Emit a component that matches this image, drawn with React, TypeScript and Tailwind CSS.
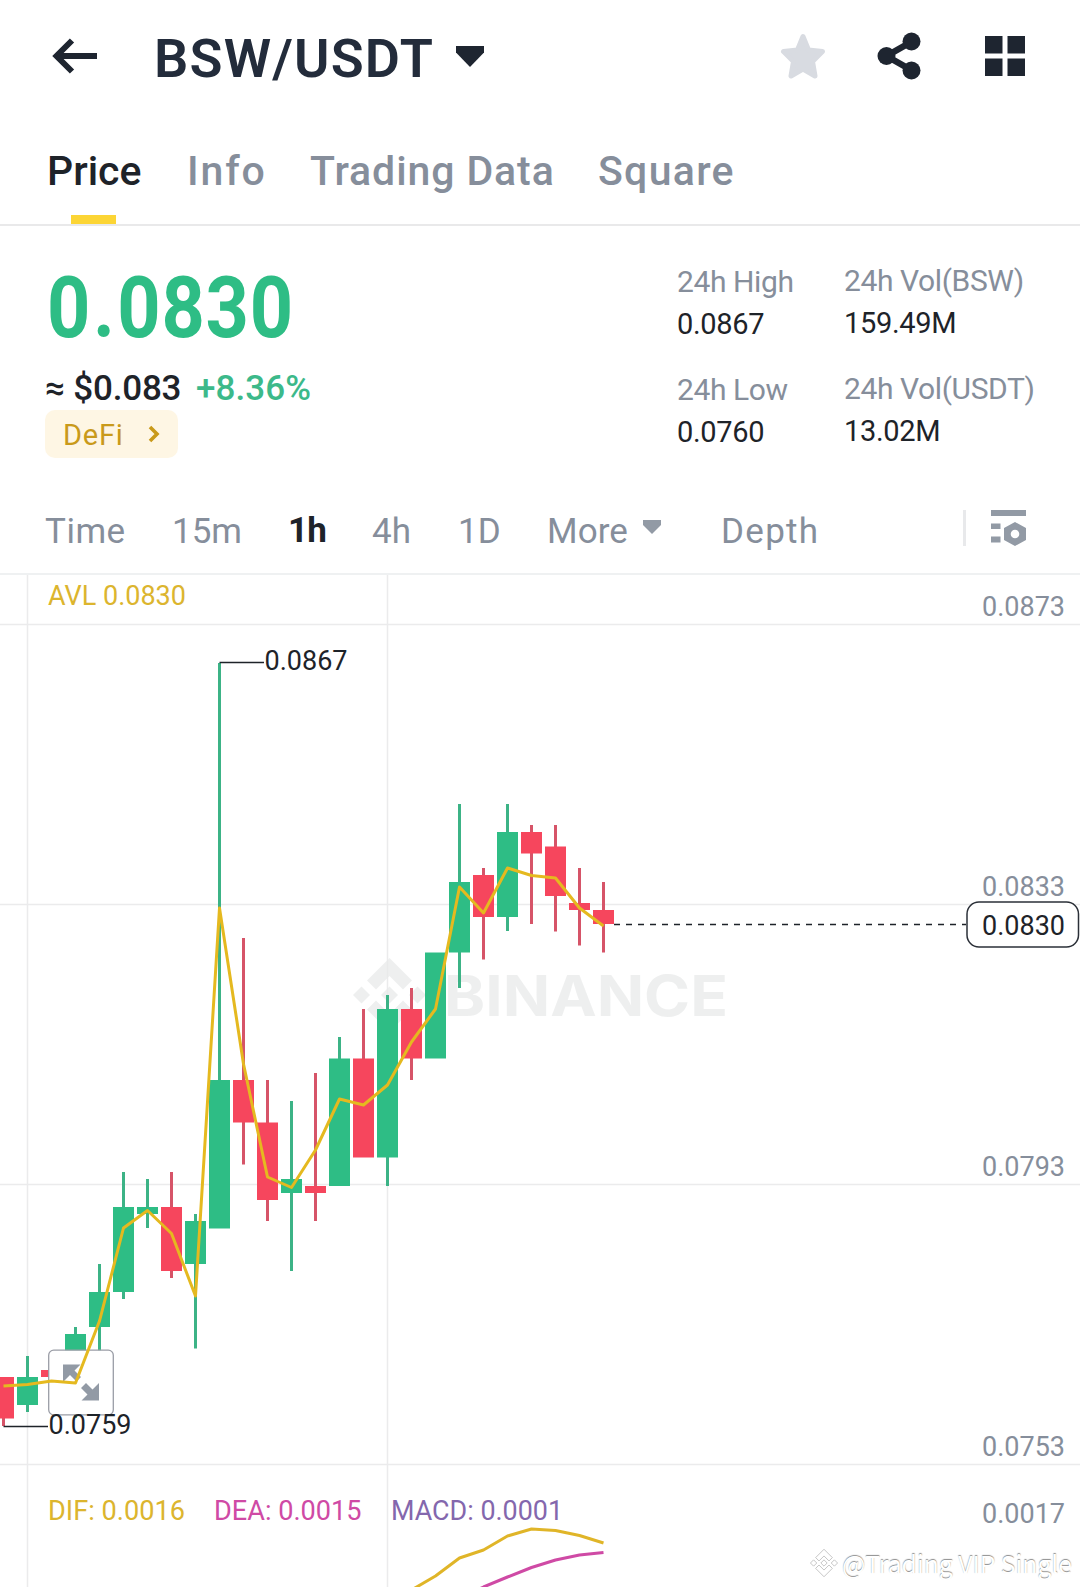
import type { ReactNode } from 'react';

const GREEN = '#2ebd85';
const RED = '#f6465d';
const GREEN_WICK = '#3cb386';
const RED_WICK = '#d65468';

// [center x, body top, body bottom, wick top, wick bottom, is rising]
type Candle = [number, number, number, number, number, boolean];

const candles: Candle[] = [
  [3.5, 1377, 1418.5, 1377, 1426, false],
  [27.5, 1377, 1405, 1356, 1412, true],
  [51.5, 1370, 1377, 1370, 1377, false],
  [75.5, 1334, 1400, 1327, 1418, true],
  [99.5, 1292, 1327, 1264, 1356, true],
  [123.5, 1207, 1292, 1172, 1299, true],
  [147.5, 1207, 1214, 1179, 1228, true],
  [171.5, 1207, 1271, 1172, 1278, false],
  [195.5, 1221, 1264, 1214, 1348.5, true],
  [219.5, 1080, 1228.5, 663, 1228, true],
  [243.5, 1080, 1122.5, 938, 1164.5, false],
  [267.5, 1122.5, 1200, 1080, 1221, false],
  [291.5, 1179, 1193, 1101, 1271, true],
  [315.5, 1186, 1193, 1073, 1221, false],
  [339.5, 1058.5, 1186, 1037, 1186, true],
  [363.5, 1058.5, 1157.5, 1009, 1157, false],
  [387.5, 1009, 1157.5, 995, 1186, true],
  [411.5, 1009, 1058.5, 988, 1080, false],
  [435.5, 952.5, 1058.5, 953, 1058, true],
  [459.5, 882, 952.5, 804, 988, true],
  [483.5, 875, 917, 868, 959.5, false],
  [507.5, 832, 917, 804, 931, true],
  [531.5, 832, 853.5, 825, 924, false],
  [555.5, 846.5, 896, 825, 931.5, false],
  [579.5, 903, 910, 868, 945.5, false],
  [603.5, 910, 924, 882, 952.5, false],
];

const avl =
  '3.5,1386 27.5,1384.5 51.5,1381 75.5,1383 99.5,1321 123.5,1228 147.5,1210.5 171.5,1233.5 195.5,1296 219.5,908 243.5,1064 267.5,1177 291.5,1187.5 315.5,1150 339.5,1099 363.5,1105 387.5,1085 411.5,1042 435.5,1009 459.5,887 483.5,913 507.5,868 531.5,875.5 555.5,878 579.5,908 603.5,926';
const dif = '411.5,1590 435.5,1576 459.5,1558 483.5,1550 507.5,1536 531.5,1529 555.5,1530.5 579.5,1535.5 603.5,1543';
const dea = '475,1591 483.5,1587 507.5,1577 531.5,1567.5 555.5,1560 579.5,1555 603.5,1552.5';

const axisLabels = [
  { y: 616, text: '0.0873' },
  { y: 896, text: '0.0833' },
  { y: 1176, text: '0.0793' },
  { y: 1456, text: '0.0753' },
  { y: 1523, text: '0.0017' },
];

function BinanceMark() {
  return (
    <>
      <path d="M0 -37 L22.5 -14.5 L13.5 -5.5 L0 -19 L-13.5 -5.5 L-22.5 -14.5 Z" />
      <path d="M0 37 L22.5 14.5 L13.5 5.5 L0 19 L-13.5 5.5 L-22.5 14.5 Z" />
      <path d="M0 -8.5 L8.5 0 L0 8.5 L-8.5 0 Z" />
      <path d="M-28 -8.5 L-19.5 0 L-28 8.5 L-36.5 0 Z" />
      <path d="M28 -8.5 L36.5 0 L28 8.5 L19.5 0 Z" />
    </>
  );
}

function Label({ x, y, w, fill, children }: { x: number; y: number; w: number; fill: string; children: ReactNode }) {
  return (
    <text x={x} y={y} fill={fill} fontSize={28} textLength={w} lengthAdjust="spacingAndGlyphs">
      {children}
    </text>
  );
}

function Header() {
  return (
    <header className="flex h-[112px] items-center pl-[52px] pr-[55px] text-[#1e2530]">
      <svg width="45" height="36" viewBox="0 0 45 36" fill="none" stroke="currentColor" strokeWidth="6">
        <path d="M45 18H5" />
        <path d="M20 2.5L4.5 18L20 33.5" />
      </svg>
      <h1 className="ml-[57px] w-[302px] whitespace-nowrap pt-[6px] text-[54px] font-semibold leading-none tracking-[1.2px] text-[#232c3b]">BSW/USDT</h1>
      <svg width="28" height="21" viewBox="0 0 28 21" fill="currentColor">
        <path d="M0 0H28V6.500L14 21L0 6.500Z" />
      </svg>
      <svg className="ml-auto" width="46" height="46" viewBox="0 0 46 46" fill="#d8dbe1" stroke="#d8dbe1" strokeWidth="5" strokeLinejoin="round">
        <path d="M23 3.500L28.500 17L42.500 18.500L32.500 28.500L35 43L23 36L11 43L13.500 28.500L3.500 18.500L17.500 17Z" />
      </svg>
      <svg className="ml-[51px]" width="44" height="48" viewBox="0 0 44 48" fill="currentColor" stroke="currentColor">
        <path d="M35 9.500L9.500 24L35 38.500" fill="none" strokeWidth="6.500" />
        <circle cx="9.500" cy="24" r="9" stroke="none" />
        <circle cx="34.500" cy="9.500" r="9" stroke="none" />
        <circle cx="34.500" cy="38.500" r="9" stroke="none" />
      </svg>
      <svg className="ml-[64px]" width="40" height="40" viewBox="0 0 40 40" fill="currentColor">
        <path d="M0 0H17.500V17.500H0ZM22.500 0H40V17.500H22.500ZM0 22.500H17.500V40H0ZM22.500 22.500H40V40H22.500Z" />
      </svg>
    </header>
  );
}

function Tabs() {
  return (
    <nav className="flex h-[114px] items-center border-b-2 border-[#e9e9ea] pl-[47px] text-[41px] font-medium text-[#868e9b]">
      <div className="relative flex h-full w-[140px] items-center text-[#1e2329]">
        <span className="pt-[7px]">Price</span>
        <span className="absolute bottom-0 left-[24px] h-[9px] w-[45px] bg-[#fcd535]" />
      </div>
      <span className="w-[123px] pt-[7px] tracking-[1.9px]">Info</span>
      <span className="w-[288px] pt-[7px] tracking-[0.9px]">Trading Data</span>
      <span className="pt-[7px] tracking-[1.3px]">Square</span>
    </nav>
  );
}

function Stat({ label, value }: { label: string; value: string }) {
  return (
    <div className="text-[30px] leading-[42px]">
      <p className="tracking-[-0.4px] text-[#868e9b]">{label}</p>
      <p className="text-[29px] tracking-[-0.3px] text-[#1e2329]">{value}</p>
    </div>
  );
}

function Ticker() {
  return (
    <section className="flex h-[249px] pl-[45px]">
      <div className="w-[632px] pt-[40px]">
        <p className="ml-[2px] w-fit origin-left scale-x-[0.89] text-[85px] font-bold leading-[84px] tracking-[0.8px] text-[#2ebd85]">
          0<span className="mx-[2px]">.</span>0830
        </p>
        <div className="mt-[16px] flex h-[46px] items-center text-[35px] font-medium">
          <span className="w-[151px] tracking-[-0.2px] text-[#1e2329]">≈ $0.083</span>
          <span className="tracking-[0.1px] text-[#3cb98a]">+8.36%</span>
        </div>
        <button className="-mt-[2px] flex h-[48px] w-[133px] items-center rounded-[10px] bg-[#fef6e4] pl-[18px] text-[29px] text-[#c99a1a]">
          <span className="pt-[3px] tracking-[0.8px]">DeFi</span>
          <svg className="ml-auto mr-[18px]" width="12" height="18" viewBox="0 0 12 18" fill="none" stroke="currentColor" strokeWidth="3.600">
            <path d="M2 2L9 9L2 16" />
          </svg>
        </button>
      </div>
      <div className="flex w-[167px] flex-col gap-[24px] pt-[35px]">
        <Stat label="24h High" value="0.0867" />
        <Stat label="24h Low" value="0.0760" />
      </div>
      <div className="flex flex-col gap-[24px] pt-[34px]">
        <Stat label="24h Vol(BSW)" value="159.49M" />
        <Stat label="24h Vol(USDT)" value="13.02M" />
      </div>
    </section>
  );
}

function Intervals() {
  return (
    <div className="flex h-[100px] items-center border-b-2 border-[#eff1f2] pl-[45px] pr-[54px] pt-[16px] text-[35px] text-[#868e9b]">
      <span className="w-[127px] tracking-[0.5px]">Time</span>
      <span className="w-[116px]">15m</span>
      <span className="w-[84px] pb-[2px] font-bold tracking-[-0.9px] text-[#1e2329]">1h</span>
      <span className="w-[86px]">4h</span>
      <span className="w-[89px]">1D</span>
      <span className="w-[96px] tracking-[0.1px]">More</span>
      <svg className="mb-[11px]" width="18" height="14" viewBox="0 0 18 14" fill="#929aa5">
        <path d="M0 0H18V5L9 14L0 5Z" />
      </svg>
      <span className="ml-[60px] tracking-[1.3px]">Depth</span>
      <span className="mb-[9px] ml-auto h-[36px] w-[3px] bg-[#e8e9eb]" />
      <svg className="mb-[8px] ml-[25px]" width="35" height="36" viewBox="0 0 35 36" fill="#929aa5">
        <path d="M0 0H35V6H0ZM0 13.500H9.500V19H0ZM0 26.500H9.500V32.500H0Z" />
        <path fillRule="evenodd" d="M24 12L35 18V30L24 36L13 30V18ZM24 19.700A4.300 4.300 0 1 0 24 28.300A4.300 4.300 0 1 0 24 19.700Z" />
      </svg>
    </div>
  );
}

function Chart() {
  return (
    <svg className="block" width="1080" height="1012" viewBox="0 575 1080 1012">
      <g stroke="#ebebec" strokeWidth="1.500">
        <path d="M27.500 575V1587M387.500 575V1587M0 624.500H1080M0 904.500H1080M0 1184.500H1080M0 1464.500H1080" />
      </g>

      <g fill="#e8eaea" fillOpacity="0.75">
        <g transform="translate(389.500 995)">
          <BinanceMark />
        </g>
        <text x="444" y="1015.500" fontFamily="Inter" fontWeight="700" fontSize="56.500" textLength="284" lengthAdjust="spacingAndGlyphs">
          BINANCE
        </text>
      </g>

      {candles.map(([x, top, bottom, high, low, up]) => (
        <g key={x}>
          <rect x={x - 1.5} y={high} width={3} height={low - high} fill={up ? GREEN_WICK : RED_WICK} />
          <rect x={x - 10.5} y={top} width={21} height={bottom - top} fill={up ? GREEN : RED} />
        </g>
      ))}

      <path d="M219.500 662.500H264M3.500 1426.500H48" stroke="#1e2329" strokeWidth="1.500" />
      <Label x={264.5} y={670} w={83} fill="#1e2329">0.0867</Label>

      {/* fullscreen toggle */}
      <rect x="48.700" y="1350.200" width="64.600" height="64.600" rx="5" fill="#fff" stroke="#9a9da6" strokeWidth="1.300" />
      <path d="M63 1364.500H80.500L74.500 1370.500L81 1377L76.500 1381.500L70 1375L63 1382Z" fill="#929aa5" />
      <path d="M99 1400.500H81.500L87.500 1394.500L81 1388L86 1383L92.500 1389.500L99 1383Z" fill="#929aa5" />
      <Label x={48.5} y={1434} w={83} fill="#1e2329">0.0759</Label>

      <polyline points={avl} fill="none" stroke="#e5b91f" strokeWidth="3" strokeLinejoin="round" />
      <polyline points={dif} fill="none" stroke="#e0b528" strokeWidth="3" strokeLinejoin="round" />
      <polyline points={dea} fill="none" stroke="#cf4aa5" strokeWidth="3" strokeLinejoin="round" />

      <path d="M614 924.500H966" stroke="#1e2329" strokeWidth="1.500" strokeDasharray="6 6" />
      <rect x="967" y="902" width="111.500" height="45" rx="12" fill="#fff" stroke="#2b3038" strokeWidth="1.500" />
      <Label x={982} y={935} w={83} fill="#1e2329">0.0830</Label>

      {axisLabels.map((l) => (
        <Label key={l.text} x={982} y={l.y} w={83} fill="#868e9b">{l.text}</Label>
      ))}

      <Label x={48} y={605} w={138} fill="#dcb52e">AVL 0.0830</Label>
      <Label x={48} y={1520} w={137} fill="#dcb52e">DIF: 0.0016</Label>
      <Label x={214} y={1520} w={147.5} fill="#cf4aa5">DEA: 0.0015</Label>
      <Label x={391} y={1520} w={172} fill="#8467ad">MACD: 0.0001</Label>
    </svg>
  );
}

export default function App() {
  return (
    <main className="relative h-[1587px] w-[1080px] overflow-hidden bg-white font-[Roboto,sans-serif]">
      <Header />
      <Tabs />
      <Ticker />
      <Intervals />
      <Chart />
      <div className="absolute bottom-[6px] right-[8px] flex items-center gap-[4px] font-['Noto_Sans_CJK_SC',sans-serif] text-[24.7px] leading-[36px] text-white [text-shadow:0_-1px_1px_rgba(0,0,0,0.45)]">
        <svg className="overflow-visible" width="28" height="26" viewBox="-37 -35 74 70" fill="#fff" stroke="#a9a9a9" strokeWidth="1.800">
          <BinanceMark />
        </svg>
        @Trading VIP Single
      </div>
    </main>
  );
}
